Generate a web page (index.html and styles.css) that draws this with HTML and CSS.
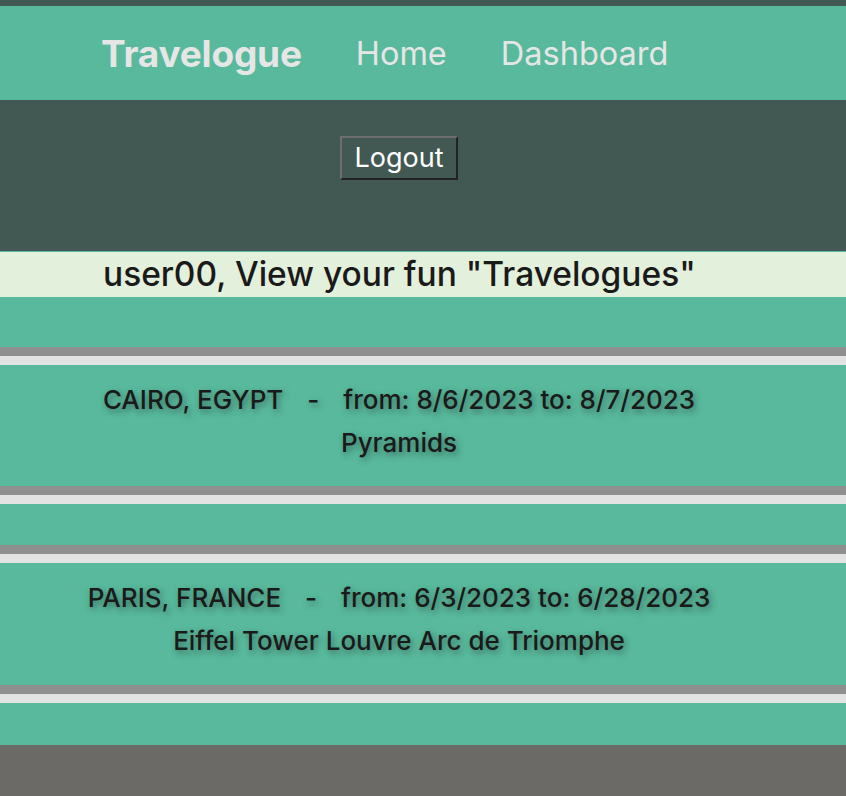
FILE: index.html
```html
<!DOCTYPE html>
<html lang="en">
<head>
  <meta charset="UTF-8">
  <meta name="viewport" content="width=device-width, initial-scale=1.0">
  <title>Travelogue</title>
  <link rel="stylesheet" href="styles.css">
</head>
<body>
  <div class="page">
    <nav class="navbar">
      <a class="brand" href="#">Travelogue</a>
      <a class="nav-link" href="#">Home</a>
      <a class="nav-link" href="#">Dashboard</a>
    </nav>

    <div class="account">
      <button class="logout">Logout</button>
    </div>

    <h2 class="welcome">user00, View your fun "Travelogues"</h2>

    <div class="trips">
      <div class="trip">
        <div class="rule"></div>
        <div class="trip-card">
          <p class="trip-line"><span>CAIRO, EGYPT</span><span class="dash">-</span><span>from: 8/6/2023 to: 8/7/2023</span></p>
          <p class="trip-line">Pyramids</p>
        </div>
        <div class="rule"></div>
      </div>

      <div class="trip">
        <div class="rule"></div>
        <div class="trip-card">
          <p class="trip-line"><span>PARIS, FRANCE</span><span class="dash">-</span><span>from: 6/3/2023 to: 6/28/2023</span></p>
          <p class="trip-line">Eiffel Tower Louvre Arc de Triomphe</p>
        </div>
        <div class="rule"></div>
      </div>
    </div>
  </div>
</body>
</html>
```

FILE: styles.css
```css
body { margin: 0; background: #6b6a67; font-family: Inter, "Noto Sans", sans-serif; color: #1a1a1a; }
.page { background: #425853; padding-top: 6px; }
.navbar { display: flex; align-items: center; gap: 54px; height: 94px; padding-left: 101px; background: #58b99c; }
.navbar a { color: #e6e6e6; text-decoration: none; font-size: 32.5px; }
.navbar .brand { font-size: 37px; font-weight: 700; letter-spacing: -0.2px; }
.account { height: 151px; padding-top: 36px; box-sizing: border-box; padding-right: 48px; text-align: center; }
.logout { font-family: inherit; font-size: 27px; color: #fff; background: #425853; padding: 3px 12px 4px; border: 2px solid; border-color: #6e6e6e #222 #222 #6e6e6e; }
.welcome { margin: 0; height: 45px; padding-left: 103px; border-top: 1px solid #58b99c; background: #e3f0dc; font-size: 33.5px; font-weight: 500; line-height: 45px; }
.trips { background: #58b99c; padding: 50px 0 42px; display: flex; flex-direction: column; gap: 41px; }
.trip:last-child .trip-card { padding-bottom: 23px; }
.rule { height: 0; border-top: 9px solid #8f8f8f; border-bottom: 9px solid #e3e3e3; }
.trip-card { padding: 13px 48px 22px 0; text-align: center; }
.trip-line { margin: 0; font-size: 26px; font-weight: 500; line-height: 43px; text-shadow: 2px 3px 6px rgba(40, 60, 55, 0.6); }
.dash { margin: 0 24px; }
```
